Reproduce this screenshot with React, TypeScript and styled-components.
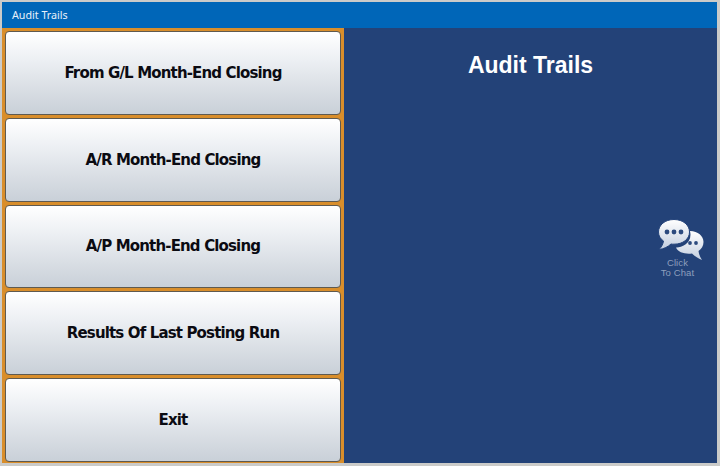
import styled, { createGlobalStyle } from "styled-components";

const menuItems = [
  "From G/L Month-End Closing",
  "A/R Month-End Closing",
  "A/P Month-End Closing",
  "Results Of Last Posting Run",
  "Exit",
];

export default function App() {
  return (
    <>
      <GlobalStyle />
      <Window>
        <TitleBar>Audit Trails</TitleBar>
        <Body>
          <Menu>
            {menuItems.map((item) => (
              <MenuButton key={item}>{item}</MenuButton>
            ))}
          </Menu>
          <Content>
            <Heading>Audit Trails</Heading>
            <ChatWidget>
              <svg width="46" height="42" viewBox="0 0 46 42">
                <defs>
                  <linearGradient id="bubble" x1="0" y1="0" x2="0" y2="1">
                    <stop offset="0" stopColor="#ffffff" />
                    <stop offset="1" stopColor="#c3cedf" />
                  </linearGradient>
                </defs>
                <path
                  d="M32 12c8 0 13.500 5 13.500 11 0 4-2 7-5 9 .3 3 1.500 6 3.500 9-4-1.500-7.500-4-10-6.500-7 .8-14-1-16-6 5 .5 17-4 14-16.500z"
                  fill="url(#bubble)"
                />
                <path
                  d="M16 0.500C7 0.500 0.500 6 0.500 13c0 4 2 7 5 9-.4 3-2 6-4.500 8.500 5-.5 9-2.800 12-5.500 1 .2 2 .2 3 .2 9 0 15.500-5.200 15.500-12.200S25 0.500 16 0.500z"
                  fill="url(#bubble)"
                  stroke="#24437a"
                  strokeWidth="1"
                />
                <g fill="#2c4a7e">
                  <circle cx="9" cy="13" r="2.400" />
                  <circle cx="16" cy="13" r="2.400" />
                  <circle cx="23" cy="13" r="2.400" />
                  <circle cx="32" cy="24" r="1.900" />
                  <circle cx="38" cy="24" r="1.900" />
                </g>
              </svg>
              <ChatLabel>
                Click
                <br />
                To Chat
              </ChatLabel>
            </ChatWidget>
          </Content>
        </Body>
      </Window>
    </>
  );
}

const GlobalStyle = createGlobalStyle`
  html, body {
    margin: 0;
    padding: 0;
    background: #c9c9c9;
  }
`;

const Window = styled.div`
  width: 720px;
  height: 466px;
  box-sizing: border-box;
  padding: 2px 3px 3px 2px;
  display: flex;
  flex-direction: column;
  background: #cbcbc9;
`;

const TitleBar = styled.div`
  height: 26px;
  flex: none;
  box-sizing: border-box;
  padding: 0 0 1px 10px;
  display: flex;
  align-items: center;
  background: #0066b8;
  color: #e8f1fa;
  font: 10.700px "Noto Sans", "Open Sans", sans-serif;
`;

const Body = styled.div`
  flex: 1;
  min-height: 0;
  display: flex;
`;

const Menu = styled.div`
  width: 342px;
  flex: none;
  box-sizing: border-box;
  padding: 3px 3px 1px 3px;
  display: flex;
  flex-direction: column;
  gap: 3px;
  background: #d98e2b;
`;

const MenuButton = styled.button`
  flex: 1;
  min-height: 0;
  padding: 0;
  border: 1px solid #5f5a50;
  border-radius: 4px;
  background: linear-gradient(180deg, #ffffff 0%, #eceff3 35%, #d9dee4 70%, #c9d0d8 100%);
  color: #0b0b12;
  font: bold 15px "DejaVu Sans", Verdana, sans-serif;
  letter-spacing: -0.85px;
  text-align: center;
`;

const Content = styled.div`
  flex: 1;
  position: relative;
  display: flex;
  justify-content: center;
  background: #234278;
`;

const Heading = styled.h1`
  margin: 24px 0 0;
  color: #ffffff;
  font: bold 23px "Liberation Sans", Arial, sans-serif;
`;

const ChatWidget = styled.div`
  position: absolute;
  top: 191px;
  right: 13px;
  width: 46px;
  display: flex;
  flex-direction: column;
  align-items: center;
`;

const ChatLabel = styled.div`
  margin: -3px 7px 0 0;
  color: #8d9fbd;
  font: 9.500px/10px "Liberation Sans", Arial, sans-serif;
  letter-spacing: 0.1px;
  text-align: center;
  white-space: nowrap;
`;
